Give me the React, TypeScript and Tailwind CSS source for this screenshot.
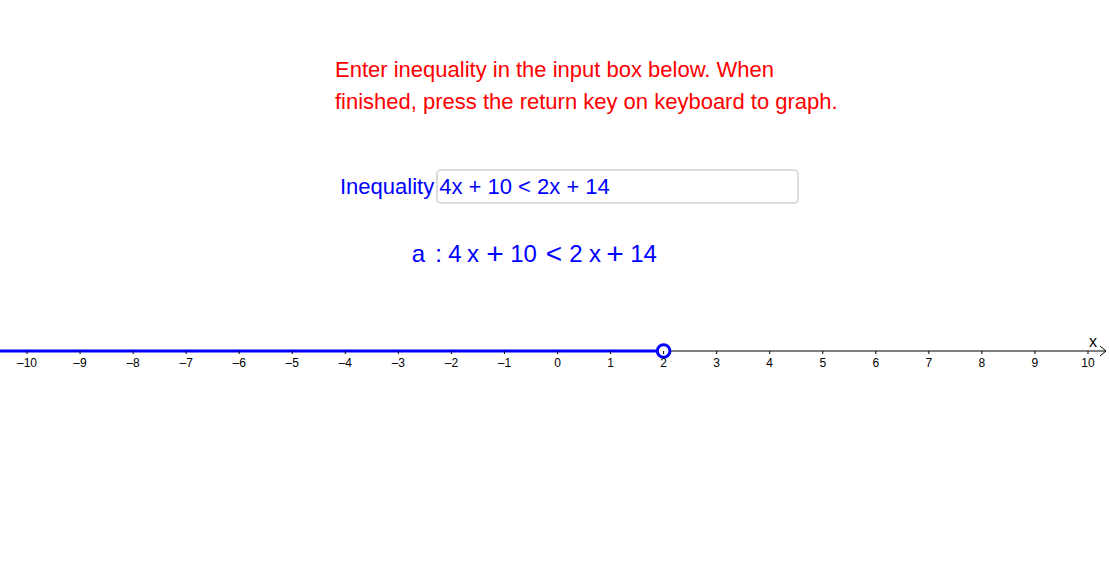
const ticks = Array.from({ length: 21 }, (_, i) => i - 10);
const X0 = 557.5;
const UNIT = 53.05;
const px = (v: number) => X0 + v * UNIT;

function NumberLine() {
  const y = 20;
  return (
    <svg width={1109} height={45} className="block" style={{ fontFamily: '"Liberation Sans", Arial, sans-serif' }}>
      <line x1={0} y1={y} x2={1106} y2={y} stroke="#000" strokeWidth={1} />
      <polyline points={`1100,${y - 5} 1106,${y} 1100,${y + 5}`} fill="none" stroke="#000" strokeWidth={1} />
      <line x1={0} y1={y} x2={px(2) - 6} y2={y} stroke="#0000ff" strokeWidth={3} />
      <circle cx={px(2)} cy={y} r={6.3} fill="#fff" stroke="#0000ff" strokeWidth={3} />
      {ticks.map((t) => (
        <g key={t}>
          <line x1={px(t)} y1={y} x2={px(t)} y2={y + 3} stroke="#000" strokeWidth={1} />
          <text x={px(t)} y={y + 16} fontSize={12} textAnchor="middle" fill="#000">
            {t < 0 ? `\u2013${-t}` : t}
          </text>
        </g>
      ))}
      <text x={1093} y={y - 4} fontSize={16} textAnchor="middle" fill="#000">
        x
      </text>
    </svg>
  );
}

// glyph boxes for the rendered formula "a : 4x + 10 < 2x + 14"
const formula: [string, string][] = [
  ["a", "w-[17px]"],
  [":", "w-[23px]"],
  ["4", "w-[10px]"],
  ["x", "w-[26px]"],
  ["+", "w-[18px] text-[30px] font-light"],
  ["10", "w-[39px]"],
  ["<", "w-[22px] text-[28px] font-light"],
  ["2", "w-[22px]"],
  ["x", "w-[16px]"],
  ["+", "w-[24px] text-[30px] font-light"],
  ["14", "w-[33px]"],
];

export default function App() {
  return (
    <div className="w-[1109px] h-[562px] bg-white overflow-hidden font-['Liberation_Sans',Arial,sans-serif]">
      <p className="pt-[54px] pl-[335px] text-[22px] leading-[32px] text-[#ff0000]">
        Enter inequality in the input box below. When
        <br />
        finished, press the return key on keyboard to graph.
      </p>

      <div className="mt-[51px] pl-[340px] flex items-center text-[22px] text-[#0000ff]">
        <span>Inequality</span>
        <div className="ml-[2px] w-[363px] h-[35px] border-2 border-[#dcdcdc] rounded-[5px] flex items-center pl-[1px]">
          4x + 10 &lt; 2x + 14
        </div>
      </div>

      <div className="mt-[36px] pl-[410px] h-[28px] flex items-center text-[24px] text-[#0000ff]">
        {formula.map(([g, w], i) => (
          <span key={i} className={`${w} flex justify-center whitespace-nowrap leading-none`}>
            {g}
          </span>
        ))}
      </div>

      <div className="mt-[63px]">
        <NumberLine />
      </div>
    </div>
  );
}
